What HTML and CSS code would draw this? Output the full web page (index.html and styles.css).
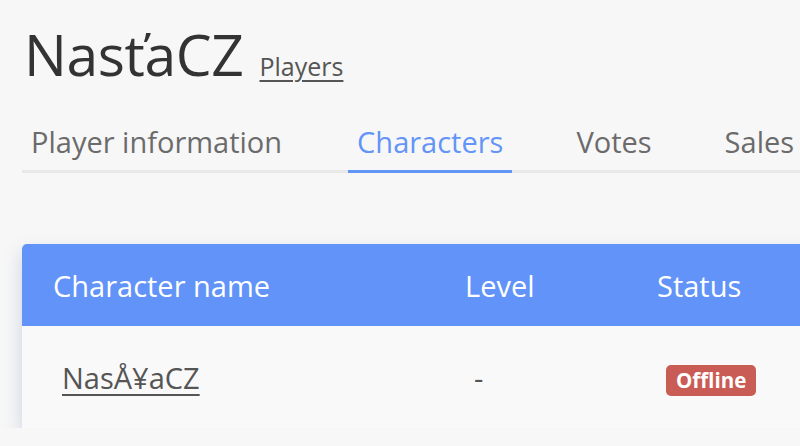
FILE: index.html
```html
<!DOCTYPE html>
<html lang="en">
<head>
<meta charset="utf-8">
<title>NasťaCZ - Players</title>
<link rel="stylesheet" href="styles.css">
</head>
<body>
<div class="page">
  <header class="title-row">
    <h1 class="title">NasťaCZ</h1>
    <a class="crumb" href="#">Players</a>
  </header>
  <nav class="tabs">
    <a class="tab" href="#">Player information</a>
    <a class="tab active" href="#">Characters</a>
    <a class="tab" href="#">Votes</a>
    <a class="tab" href="#">Sales</a>
  </nav>
  <div class="card">
    <table class="grid">
      <colgroup>
        <col class="w-name">
        <col class="w-level">
        <col class="w-status">
      </colgroup>
      <thead>
        <tr>
          <th>Character name</th>
          <th>Level</th>
          <th>Status</th>
        </tr>
      </thead>
      <tbody>
        <tr>
          <td><a class="char-link" href="#">NasÅ¥aCZ</a></td>
          <td>-</td>
          <td><span class="badge">Offline</span></td>
        </tr>
      </tbody>
    </table>
  </div>
</div>
</body>
</html>
```

FILE: styles.css
```css
html, body {
  margin: 0;
  padding: 0;
  background: #f7f7f7;
  overflow: hidden;
}
body {
  font-family: "Open Sans", "Noto Sans", sans-serif;
  color: #333;
}
.page {
  padding: 14px 0 0 22px;
  width: 1000px;
}
.title-row {
  display: flex;
  align-items: baseline;
  gap: 16px;
  padding-left: 2px;
}
.title {
  margin: 0;
  font-size: 57px;
  font-weight: 400;
  line-height: 80px;
  color: #333;
  letter-spacing: -0.4px;
}
.crumb {
  font-size: 25px;
  color: #555;
  text-decoration: underline;
  text-underline-offset: 4px;
  text-decoration-thickness: 2px;
}
.tabs {
  display: flex;
  gap: 55px;
  margin-top: 28px;
  border-bottom: 3px solid #e8e8e8;
}
.tab {
  font-size: 29px;
  line-height: 40px;
  padding: 0 9px 8px;
  color: #6b6b6b;
  text-decoration: none;
  margin-bottom: -3px;
  border-bottom: 3px solid transparent;
}
.tab:first-child {
  margin-right: 2px;
}
.tab.active {
  color: #6394f8;
  border-bottom-color: #6394f8;
}
.card {
  margin-top: 71px;
  width: 978px;
  background: #f9f9f9;
  border-radius: 5px 0 0 0;
  box-shadow: 0 8px 18px rgba(150, 165, 195, 0.45);
  overflow: hidden;
}
.grid {
  width: 100%;
  table-layout: fixed;
  border-collapse: collapse;
}
.w-name { width: 412px; }
.w-level { width: 192px; }
.grid th {
  background: #6193f8;
  color: #fff;
  font-weight: 400;
  font-size: 29px;
  text-align: left;
  height: 82px;
  padding: 0 0 0 31px;
}
.grid td {
  height: 102px;
  padding: 0 0 0 40px;
  font-size: 29px;
  color: #555;
}
.char-link {
  color: #555;
  text-decoration: underline;
  text-underline-offset: 5px;
  text-decoration-thickness: 2px;
}
.badge {
  display: inline-block;
  vertical-align: middle;
  background: #c95c55;
  color: #fff;
  font-weight: 700;
  font-size: 20.5px;
  line-height: 31px;
  padding: 0 10px;
  border-radius: 5px;
}
```
